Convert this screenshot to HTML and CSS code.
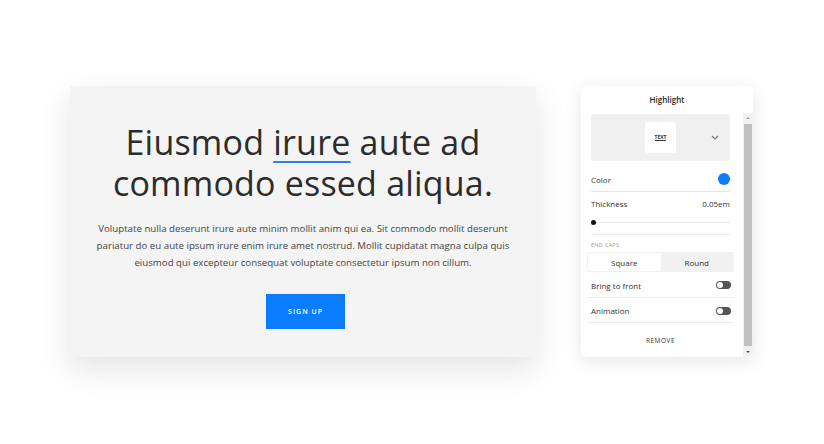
FILE: index.html
```html
<!DOCTYPE html>
<html>
<head>
<meta charset="utf-8">
<link rel="stylesheet" href="styles.css">
</head>
<body>
<div class="stage">
  <section class="card">
    <h1 class="headline">Eiusmod <span class="hl">irure</span> aute ad<br>commodo essed aliqua.</h1>
    <p class="lead">Voluptate nulla deserunt irure aute minim mollit anim qui ea. Sit commodo mollit deserunt<br>pariatur do eu aute ipsum irure enim irure amet nostrud. Mollit cupidatat magna culpa quis<br>eiusmod qui excepteur consequat voluptate consectetur ipsum non cillum.</p>
    <a class="btn">SIGN UP</a>
  </section>
  <aside class="panel">
    <div class="panel-head">Highlight</div>
    <div class="panel-body">
      <div class="panel-scroll">
        <div class="preview">
          <div class="tile"><span class="tile-text">TEXT</span></div>
          <svg class="chev" width="8" height="5" viewBox="0 0 8 5"><path d="M1 1l3 3 3-3" fill="none" stroke="#777" stroke-width="1.1"/></svg>
        </div>
        <div class="row row-color"><span>Color</span><span class="dot"></span></div>
        <div class="thick">
          <div class="thick-top"><span>Thickness</span><span>0.05em</span></div>
          <div class="slider"><span class="knob"></span></div>
        </div>
        <div class="caps-label">END CAPS</div>
        <div class="seg"><span class="seg-item on">Square</span><span class="seg-item">Round</span></div>
        <div class="row row-t"><span>Bring to front</span><span class="toggle"></span></div>
        <div class="row row-t"><span>Animation</span><span class="toggle"></span></div>
        <div class="remove">REMOVE</div>
      </div>
      <div class="scrollbar">
        <span class="arr up"></span>
        <span class="thumb"></span>
        <span class="arr down"></span>
      </div>
    </div>
  </aside>
</div>
</body>
</html>
```
FILE: styles.css
```css
* { box-sizing: border-box; }
html, body { margin: 0; padding: 0; background: #fff; }
body { font-family: "Open Sans", "Liberation Sans", sans-serif; color: #333; width: 824px; height: 444px; overflow: hidden; }
.stage { display: flex; align-items: flex-start; gap: 45px; padding: 86px 0 0 70px; }
.card {
  width: 466px; height: 271px; background: #f4f4f4;
  box-shadow: 0 12px 30px rgba(0,0,0,0.11);
  display: flex; flex-direction: column; align-items: center;
  padding-top: 36px;
}
.headline {
  margin: 0; font-weight: 400; font-size: 34px; line-height: 41px;
  color: #2c2c2c; text-align: center; white-space: nowrap; letter-spacing: 0.2px;
}
.hl { text-decoration: underline; text-decoration-color: #2d7cf0; text-decoration-thickness: 2px; text-underline-offset: 6px; }
.lead {
  margin: 16px 0 0; font-size: 9.7px; line-height: 17px; color: #444;
  text-align: center; white-space: nowrap;
}
.btn {
  margin: 23px 0 0 5px; width: 79px; height: 35px; background: #0a7cff; color: #fff;
  font-size: 7px; letter-spacing: 1px; font-weight: 600;
  display: flex; align-items: center; justify-content: center;
}
.panel {
  width: 172px; height: 271px; background: #fff; border-radius: 5px;
  box-shadow: 0 4px 18px rgba(0,0,0,0.10);
  display: flex; flex-direction: column; overflow: hidden;
  font-size: 8px; color: #333;
}
.panel-head { flex: 0 0 27px; display: flex; align-items: center; justify-content: center; font-weight: 600; font-size: 8px; color: #222; }
.panel-body { flex: 1; display: flex; min-height: 0; overflow: hidden; }
.panel-scroll { flex: 1; padding: 1px 9px 0 6px; }
.preview {
  margin: 0 4px; height: 47px; background: #f0f0f0; border-radius: 4px;
  display: flex; align-items: center; justify-content: center; position: relative;
}
.tile { width: 31px; height: 31px; background: #fff; border-radius: 3px; display: flex; align-items: center; justify-content: center; }
.tile-text { font-size: 5px; font-weight: 700; color: #333; border-bottom: 1px solid #333; line-height: 6px; }
.chev { position: absolute; right: 11px; top: 21px; }
.row { display: flex; align-items: center; justify-content: space-between; }
.row-color { margin: 0 4px; height: 31px; padding-top: 6px; border-bottom: 1px solid #e6e6e6; }
.dot { width: 12px; height: 12px; border-radius: 50%; background: #0a7cff; }
.thick { margin: 0 4px; height: 43px; border-bottom: 1px solid #ececec; }
.thick-top { display: flex; justify-content: space-between; padding-top: 6px; height: 20px; }
.slider { margin-top: 10px; height: 1px; background: #e6e6e6; position: relative; }
.knob { position: absolute; left: 0; top: -2px; width: 5px; height: 5px; border-radius: 50%; background: #111; }
.caps-label { font-size: 5.5px; color: #999; letter-spacing: 0.3px; padding: 6px 4px 0; height: 17px; }
.seg { display: flex; height: 20px; background: #f1f1f1; border-radius: 2px; padding: 1px; }
.seg-item { flex: 1; display: flex; align-items: center; justify-content: center; color: #333; }
.seg-item.on { background: #fff; border-radius: 2px; }
.row-t { height: 26px; padding: 1px 3px 0 4px; border-bottom: 1px solid #ececec; }
.row-t + .row-t { height: 25px; }
.toggle { width: 15px; height: 8px; border-radius: 4px; background: #555; position: relative; }
.toggle::before { content: ""; position: absolute; left: 1px; top: 1px; width: 6px; height: 6px; border-radius: 50%; background: #fff; }
.remove { height: 34px; display: flex; align-items: center; justify-content: center; font-size: 6.5px; letter-spacing: 0.5px; color: #333; }
.scrollbar { width: 10px; background: #f1f1f1; display: flex; flex-direction: column; align-items: center; }
.thumb { width: 8px; flex: 1; background: #c1c1c1; }
.arr { height: 11px; width: 10px; position: relative; }
.arr::before { content: ""; position: absolute; left: 3px; border-left: 2px solid transparent; border-right: 2px solid transparent; }
.arr.up::before { top: 4px; border-bottom: 2px solid #a3a3a3; }
.arr.down::before { top: 5px; border-top: 2px solid #505050; }
```
